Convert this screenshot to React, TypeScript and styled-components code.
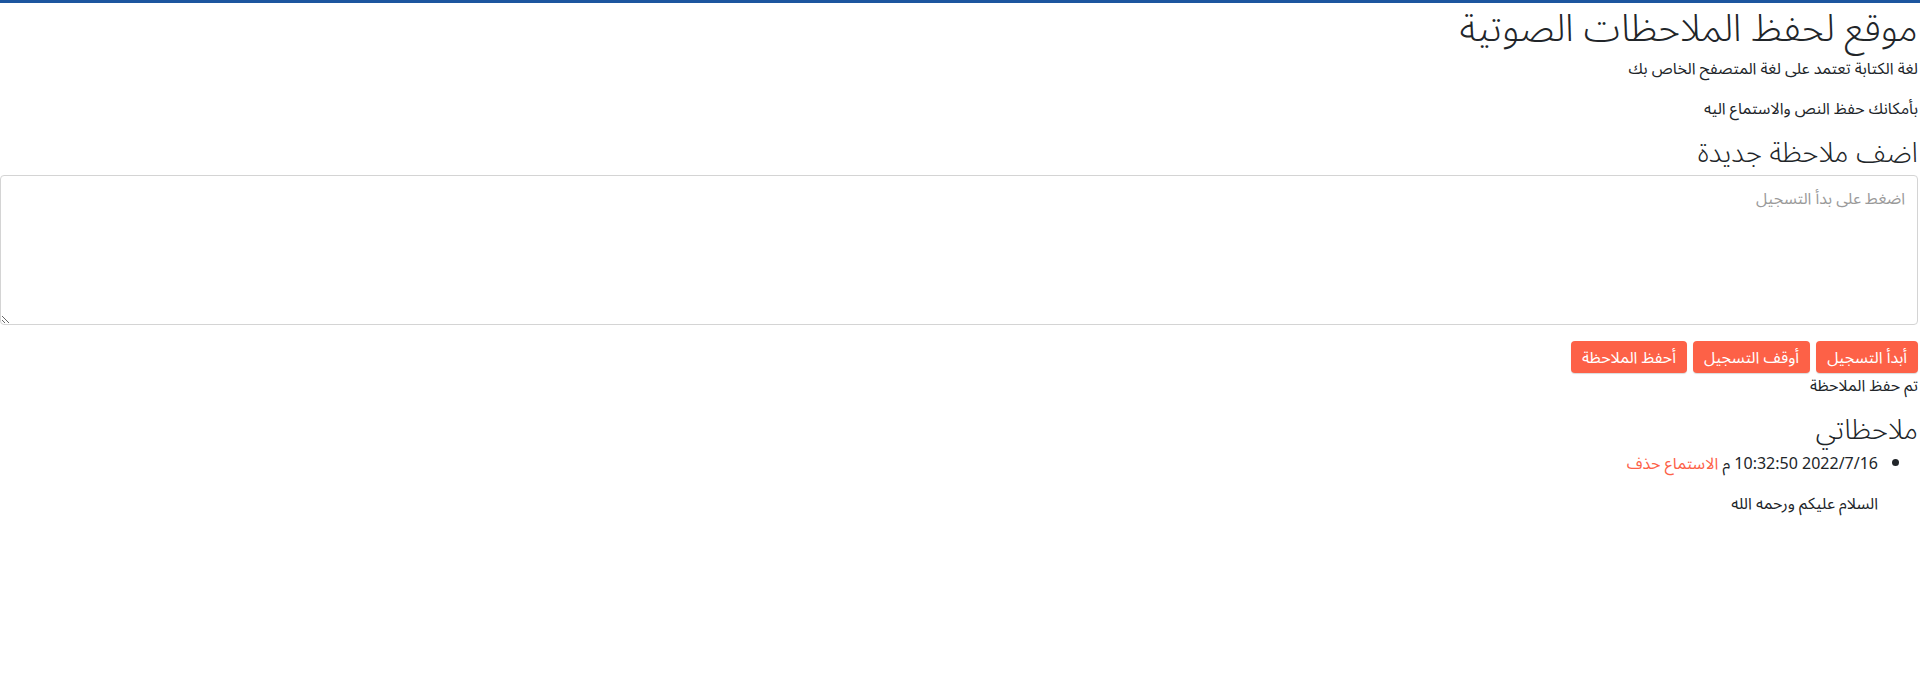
import React from 'react'
import styled, { createGlobalStyle } from 'styled-components'

const GlobalStyle = createGlobalStyle`
  html, body {
    margin: 0;
    padding: 0;
    background: #fff;
  }
  body {
    border-top: 3px solid #1d569f;
    font-family: "Noto Sans Arabic", "DejaVu Sans", "Noto Sans", sans-serif;
    color: #212529;
  }
`

const Page = styled.div`
  direction: rtl;
  padding: 2px 2px 0 0;
  font-size: 16px;
  line-height: 24px;
`

const Title = styled.h1`
  margin: 0 0 4px;
  font-size: 38px;
  line-height: 48px;
  font-weight: 300;
`

const Heading = styled.h3<{ $top?: number }>`
  margin: ${p => p.$top ?? 0}px 0 4px;
  font-size: 28px;
  line-height: 34px;
  font-weight: 300;
`

const Line = styled.p<{ $gap?: number }>`
  margin: ${p => p.$gap ?? 0}px 0 0;
`

const NoteInput = styled.textarea`
  display: block;
  box-sizing: border-box;
  width: 100%;
  height: 150px;
  margin: 0;
  padding: 6px 12px;
  border: 1px solid #d4d4d4;
  border-radius: 4px;
  font-family: inherit;
  font-size: 16px;
  direction: rtl;
  &::placeholder {
    color: #9a9a9a;
  }
`

const Toolbar = styled.div`
  display: flex;
  gap: 6px;
  margin-top: 16px;
`

const Button = styled.button`
  height: 32px;
  padding: 0 11px;
  border: none;
  border-radius: 4px;
  background: #fd6147;
  color: #fff;
  font-family: inherit;
  font-size: 16px;
  box-shadow: 0 1px 1px rgba(0, 0, 0, 0.15);
`

const Status = styled.div`
  margin-top: 1px;
`

const NoteList = styled.ul`
  margin: 4px 0 0;
  padding: 0 40px 0 0;
`

const Action = styled.a`
  color: #fd6147;
  text-decoration: none;
`

const NoteText = styled.p`
  margin: 16px 0 0;
`

export default function App() {
  return (
    <Page>
      <GlobalStyle />
      <Title>موقع لحفظ الملاحظات الصوتية</Title>
      <Line>لغة الكتابة تعتمد على لغة المتصفح الخاص بك</Line>
      <Line $gap={16}>بأمكانك حفظ النص والاستماع اليه</Line>
      <Heading $top={16}>اضف ملاحظة جديدة</Heading>
      <NoteInput placeholder="اضغط على بدأ التسجيل" />
      <Toolbar>
        <Button>أبدأ التسجيل</Button>
        <Button>أوقف التسجيل</Button>
        <Button>أحفظ الملاحظة</Button>
      </Toolbar>
      <Status>تم حفظ الملاحظة</Status>
      <Heading $top={16}>ملاحظاتي</Heading>
      <NoteList>
        <li>
          <span>2022/7/16 10:32:50 م </span>
          <Action>الاستماع</Action> <Action>حذف</Action>
          <NoteText>السلام عليكم ورحمه الله</NoteText>
        </li>
      </NoteList>
    </Page>
  )
}
